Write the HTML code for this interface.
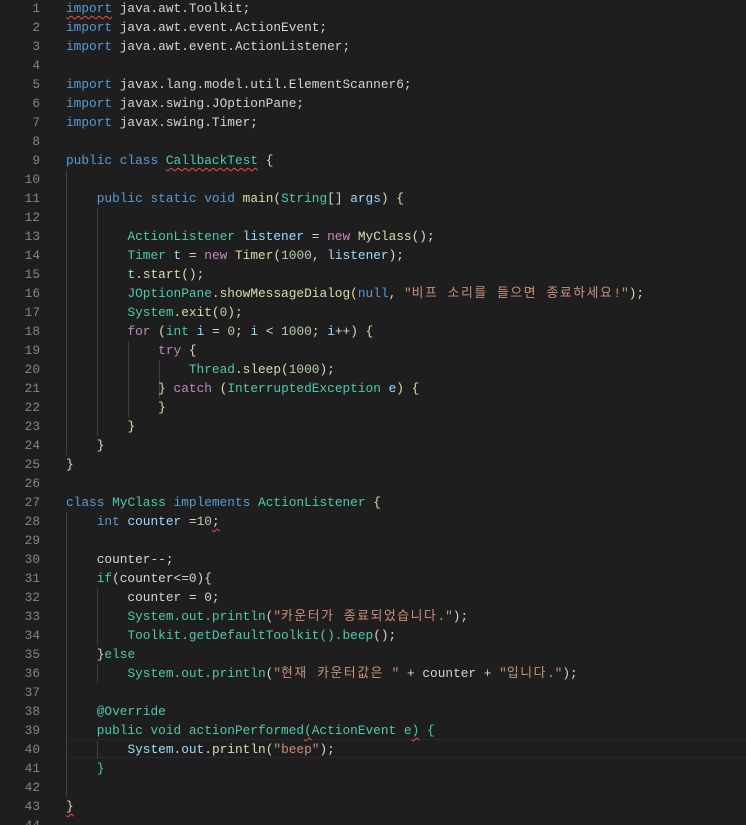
<!DOCTYPE html>
<html><head><meta charset="utf-8">
<style>
html,body{margin:0;padding:0;background:#1e1e1e;width:746px;height:825px;overflow:hidden}
#ed{position:relative;width:746px;height:825px;font-family:"Liberation Mono","Noto Sans CJK KR",monospace;font-size:12.8px;color:#d4d4d4}
#gut{position:absolute;left:0;top:-1px;width:40px;text-align:right;color:#858585;line-height:19px}
#gut div,#code div{height:19px}
#code{position:absolute;left:66px;top:-1px;line-height:19px;white-space:pre}
.g{position:absolute;width:1px;background:#404040}
.k{color:#569cd6}.p{color:#c586c0}.t{color:#4ec9b0}.f{color:#dcdcaa}.v{color:#9cdcfe}.s{color:#ce9178}.n{color:#b5cea8}.b,.b2,.b3{color:#e2d9b2}
.h{letter-spacing:1.6px}
.sq{text-decoration:underline wavy #f14c4c;text-decoration-thickness:1px;text-underline-offset:3px}
#cur{position:absolute;left:66px;right:0;top:739px;height:17px;border:1px solid #282828;border-right:none}
</style></head><body><div id="ed">
<div id="cur"></div>
<div class="g" style="left:66px;top:170px;height:285px"></div>
<div class="g" style="left:97px;top:208px;height:228px"></div>
<div class="g" style="left:128px;top:341px;height:76px"></div>
<div class="g" style="left:159px;top:360px;height:38px"></div>
<div class="g" style="left:66px;top:512px;height:285px"></div>
<div class="g" style="left:97px;top:588px;height:57px"></div>
<div class="g" style="left:97px;top:664px;height:19px"></div>
<div class="g" style="left:97px;top:740px;height:19px"></div>
<div id="gut"><div>1</div><div>2</div><div>3</div><div>4</div><div>5</div><div>6</div><div>7</div><div>8</div><div>9</div><div>10</div><div>11</div><div>12</div><div>13</div><div>14</div><div>15</div><div>16</div><div>17</div><div>18</div><div>19</div><div>20</div><div>21</div><div>22</div><div>23</div><div>24</div><div>25</div><div>26</div><div>27</div><div>28</div><div>29</div><div>30</div><div>31</div><div>32</div><div>33</div><div>34</div><div>35</div><div>36</div><div>37</div><div>38</div><div>39</div><div>40</div><div>41</div><div>42</div><div>43</div><div>44</div></div>
<div id="code"><div><span class="k sq">import</span> java.awt.Toolkit;</div><div><span class="k">import</span> java.awt.event.ActionEvent;</div><div><span class="k">import</span> java.awt.event.ActionListener;</div><div></div><div><span class="k">import</span> javax.lang.model.util.ElementScanner6;</div><div><span class="k">import</span> javax.swing.JOptionPane;</div><div><span class="k">import</span> javax.swing.Timer;</div><div></div><div><span class="k">public</span> <span class="k">class</span> <span class="t sq">CallbackTest</span> <span class="b">{</span></div><div></div><div>    <span class="k">public</span> <span class="k">static</span> <span class="k">void</span> <span class="f">main</span><span class="b2">(</span><span class="t">String</span>[] <span class="v">args</span><span class="b2">)</span> <span class="b2">{</span></div><div></div><div>        <span class="t">ActionListener</span> <span class="v">listener</span> = <span class="p">new</span> <span class="f">MyClass</span><span class="b3">()</span>;</div><div>        <span class="t">Timer</span> <span class="v">t</span> = <span class="p">new</span> <span class="f">Timer</span><span class="b3">(</span><span class="n">1000</span>, <span class="v">listener</span><span class="b3">)</span>;</div><div>        <span class="v">t</span>.<span class="f">start</span><span class="b3">()</span>;</div><div>        <span class="t">JOptionPane</span>.<span class="f">showMessageDialog</span><span class="b3">(</span><span class="k">null</span>, <span class="s">"<span class="h">비프 소리를 들으면 종료하세요</span>!"</span><span class="b3">)</span>;</div><div>        <span class="t">System</span>.<span class="f">exit</span><span class="b3">(</span><span class="n">0</span><span class="b3">)</span>;</div><div>        <span class="p">for</span> <span class="b3">(</span><span class="t">int</span> <span class="v">i</span> = <span class="n">0</span>; <span class="v">i</span> &lt; <span class="n">1000</span>; <span class="v">i</span>++<span class="b3">)</span> <span class="b3">{</span></div><div>            <span class="p">try</span> <span class="b">{</span></div><div>                <span class="t">Thread</span>.<span class="f">sleep</span><span class="b2">(</span><span class="n">1000</span><span class="b2">)</span>;</div><div>            <span class="b">}</span> <span class="p">catch</span> <span class="b">(</span><span class="t">InterruptedException</span> <span class="v">e</span><span class="b">)</span> <span class="b">{</span></div><div>            <span class="b">}</span></div><div>        <span class="b3">}</span></div><div>    <span class="b2">}</span></div><div><span class="b">}</span></div><div></div><div><span class="k">class</span> <span class="t">MyClass</span> <span class="k">implements</span> <span class="t">ActionListener</span> <span class="b">{</span></div><div>    <span class="k">int</span> <span class="v">counter</span> =<span class="n">10</span><span class="sq">;</span></div><div></div><div>    counter--;</div><div>    <span class="t">if</span>(counter&lt;=0){</div><div>        counter = 0;</div><div>        <span class="t">System.out.println</span>(<span class="s">"<span class="h">카운터가 종료되었습니다</span>."</span>);</div><div>        <span class="t">Toolkit.getDefaultToolkit().beep</span>();</div><div>    }<span class="t">else</span></div><div>        <span class="t">System.out.println</span>(<span class="s">"<span class="h">현재 카운터값은</span> "</span> + counter + <span class="s">"<span class="h">입니다</span>."</span>);</div><div></div><div>    <span class="t">@Override</span></div><div>    <span class="t">public void actionPerformed<span class="sq">(</span>ActionEvent e<span class="sq">)</span> {</span></div><div>        <span class="v">System</span>.<span class="v">out</span>.<span class="f">println</span><span class="b2">(</span><span class="s">"beep"</span><span class="b2">)</span>;</div><div>    <span class="t">}</span></div><div></div><div><span class="b sq">}</span></div><div></div></div>
</div>
</body></html>
